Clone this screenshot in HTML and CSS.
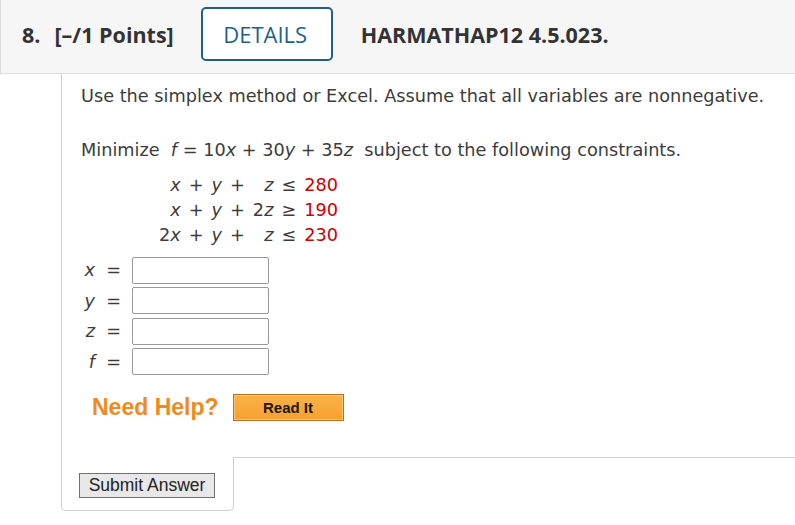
FILE: index.html
```html
<!DOCTYPE html>
<html>
<head>
<meta charset="utf-8">
<link rel="stylesheet" href="styles.css">
</head>
<body>
<div class="header">
  <span class="qnum">8.</span>
  <span class="points">[–/1 Points]</span>
  <button class="details">DETAILS</button>
  <span class="code">HARMATHAP12 4.5.023.</span>
</div>
<div class="panel">
  <div class="content">
    <p class="intro">Use the simplex method or Excel. Assume that all variables are nonnegative.</p>
    <p class="objective">Minimize&nbsp; <i>f</i> = 10<i>x</i> + 30<i>y</i> + 35<i>z</i>&nbsp; subject to the following constraints.</p>
    <table class="cons">
      <tr><td class="r"><i>x</i></td><td>+</td><td><i>y</i></td><td>+</td><td class="r"><i>z</i></td><td>≤</td><td class="rhs">280</td></tr>
      <tr><td class="r"><i>x</i></td><td>+</td><td><i>y</i></td><td>+</td><td class="r">2<i>z</i></td><td>≥</td><td class="rhs">190</td></tr>
      <tr><td class="r">2<i>x</i></td><td>+</td><td><i>y</i></td><td>+</td><td class="r"><i>z</i></td><td>≤</td><td class="rhs">230</td></tr>
    </table>
    <div class="answers">
      <div class="ans"><span class="lbl"><i>x</i>&nbsp; =</span><input class="box" type="text"></div>
      <div class="ans"><span class="lbl"><i>y</i>&nbsp; =</span><input class="box" type="text"></div>
      <div class="ans"><span class="lbl"><i>z</i>&nbsp; =</span><input class="box" type="text"></div>
      <div class="ans"><span class="lbl"><i>f</i>&nbsp; =</span><input class="box" type="text"></div>
    </div>
    <div class="help">
      <span class="need">Need Help?</span>
      <button class="readit">Read It</button>
    </div>
  </div>
  <div class="tab">
    <button class="submit">Submit Answer</button>
  </div>
</div>
</body>
</html>
```
FILE: styles.css
```css
html, body { margin: 0; padding: 0; background: #fff; }
body { width: 795px; height: 525px; overflow: hidden; }
.header {
  box-sizing: border-box;
  height: 74px;
  padding-bottom: 4px;
  background: #f6f6f6;
  border-bottom: 1px solid #dcdcdc;
  border-left: 1px solid #dcdcdc;
  display: flex;
  align-items: center;
  font-family: "Open Sans", sans-serif;
  font-weight: 700;
  font-size: 21.5px;
  color: #333;
}
.qnum { margin-left: 21px; }
.points { margin-left: 14px; }
.details {
  margin-left: 27px;
  width: 132px;
  height: 54px;
  margin-top: -1px;
  border: 2px solid #1f5f8f;
  border-radius: 5px;
  background: #fff;
  color: #1f5f8f;
  font-family: "Open Sans", sans-serif;
  font-size: 22px;
  font-weight: 400;
  padding: 0 3px 0 0;
}
.code { margin-left: 28px; }
.panel {
  margin-left: 61px;
}
.content {
  border-left: 1px solid #d0d0d0;
  border-bottom: 1px solid #d0d0d0;
  padding: 10px 0 36px 19px;
  font-family: "DejaVu Sans", Verdana, sans-serif;
  font-size: 17.7px;
  color: #3c3c3c;
}
.content p { margin: 0; line-height: 24px; }
.objective { margin-top: 30px !important; }
.cons {
  border-collapse: collapse;
  margin-left: 78px;
  margin-top: 11px;
}
.cons td { padding: 0 0 0 8px; line-height: 25px; }
.cons td:first-child { padding-left: 0; }
.cons td.r { text-align: right; }
.cons .rhs { color: #c00; }
.answers { margin-top: 7px; }
.ans { display: flex; align-items: center; height: 30.5px; }
.lbl { width: 40px; text-align: right; padding-right: 11px; white-space: nowrap; }
.box {
  width: 137px;
  height: 27px;
  box-sizing: border-box;
  border: 1px solid #999;
  border-radius: 2px;
  margin: 0;
}
.help { margin-top: 17px; display: flex; align-items: center; padding-left: 11px; }
.need {
  font-family: "Liberation Sans", Arial, sans-serif;
  font-weight: 700;
  font-size: 23px;
  color: #f08a1c;
}
.readit {
  margin-left: 14px;
  width: 111px;
  height: 27px;
  background: linear-gradient(#fbb347, #f7a030);
  border: 1px solid #b8701e;
  box-shadow: inset 0 0 0 1px #ffc868;
  font-family: "Liberation Sans", Arial, sans-serif;
  font-weight: 700;
  font-size: 15px;
  color: #1e1400;
  padding: 0;
}
.tab {
  width: 173px;
  height: 54px;
  margin-top: -1px;
  border: 1px solid #d0d0d0;
  border-top: none;
  border-radius: 0 0 5px 5px;
  background: #fff;
  display: flex;
  align-items: center;
  box-sizing: border-box;
  padding-left: 17px;
}
.submit {
  font-family: "Liberation Sans", Arial, sans-serif;
  font-size: 17.5px;
  color: #222;
  background: #e8e8e8;
  border: 1px solid #707070;
  height: 25px;
  width: 136px;
  padding: 0;
  margin-top: 3px;
}
```
